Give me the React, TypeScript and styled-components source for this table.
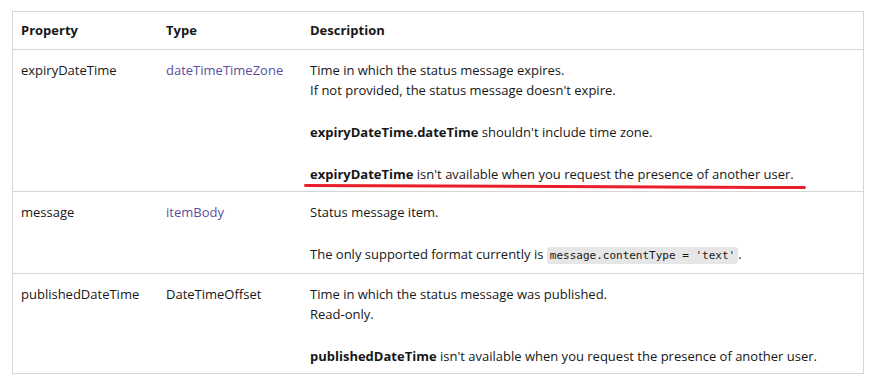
import React from 'react'
import styled, { createGlobalStyle } from 'styled-components'

const GlobalStyle = createGlobalStyle`
  html, body {
    margin: 0;
    padding: 0;
    background: #fff;
  }
  body {
    font-family: 'Open Sans', 'Noto Sans', sans-serif;
    color: #171717;
  }
`

const Page = styled.div`
  padding: 11px 20px 0 12px;
  width: 884px;
  box-sizing: border-box;
`

const Table = styled.table`
  width: 852px;
  border-collapse: collapse;
  border: 1px solid #d6d6d6;
  font-size: 13px;
  line-height: 20px;
`

const HeadCell = styled.th<{ $w?: number }>`
  text-align: left;
  font-weight: 700;
  padding: 8px 8px 9px;
  border-bottom: 1px solid #d6d6d6;
  vertical-align: top;
  ${(p) => (p.$w ? `width: ${p.$w}px;` : '')}
`

const Row = styled.tr`
  border-top: 1px solid #d6d6d6;
`

const Cell = styled.td`
  padding: 10px 8px 7px;
  vertical-align: top;
`

const TypeLink = styled.span`
  color: #5c4f9f;
`

const Para = styled.p`
  margin: 0 0 22px;
  &:last-child {
    margin-bottom: 0;
  }
`

// red marker underline drawn over the last sentence
const Marked = styled.span`
  position: relative;
  &::after {
    content: '';
    position: absolute;
    left: -6px;
    right: -12px;
    bottom: -5px;
    height: 3px;
    border-radius: 2px;
    background: #e8202c;
    transform: rotate(0.25deg);
  }
`

const Code = styled.code`
  font-family: 'DejaVu Sans Mono', 'Liberation Mono', monospace;
  font-size: 11px;
  background: #e6e6e6;
  border-radius: 3px;
  padding: 2px 3px;
`

export default function App() {
  return (
    <>
      <GlobalStyle />
      <Page>
        <Table>
          <thead>
            <tr>
              <HeadCell $w={129}>Property</HeadCell>
              <HeadCell $w={128}>Type</HeadCell>
              <HeadCell>Description</HeadCell>
            </tr>
          </thead>
          <tbody>
            <Row>
              <Cell>expiryDateTime</Cell>
              <Cell>
                <TypeLink>dateTimeTimeZone</TypeLink>
              </Cell>
              <Cell>
                <Para>
                  Time in which the status message expires.
                  <br />
                  If not provided, the status message doesn't expire.
                </Para>
                <Para>
                  <b>expiryDateTime.dateTime</b> shouldn't include time zone.
                </Para>
                <Para>
                  <Marked>
                    <b>expiryDateTime</b> isn't available when you request the presence of another user.
                  </Marked>
                </Para>
              </Cell>
            </Row>
            <Row>
              <Cell>message</Cell>
              <Cell>
                <TypeLink>itemBody</TypeLink>
              </Cell>
              <Cell>
                <Para>Status message item.</Para>
                <Para>
                  The only supported format currently is <Code>message.contentType = 'text'</Code>.
                </Para>
              </Cell>
            </Row>
            <Row>
              <Cell>publishedDateTime</Cell>
              <Cell>DateTimeOffset</Cell>
              <Cell>
                <Para>
                  Time in which the status message was published.
                  <br />
                  Read-only.
                </Para>
                <Para>
                  <b>publishedDateTime</b> isn't available when you request the presence of another user.
                </Para>
              </Cell>
            </Row>
          </tbody>
        </Table>
      </Page>
    </>
  )
}
